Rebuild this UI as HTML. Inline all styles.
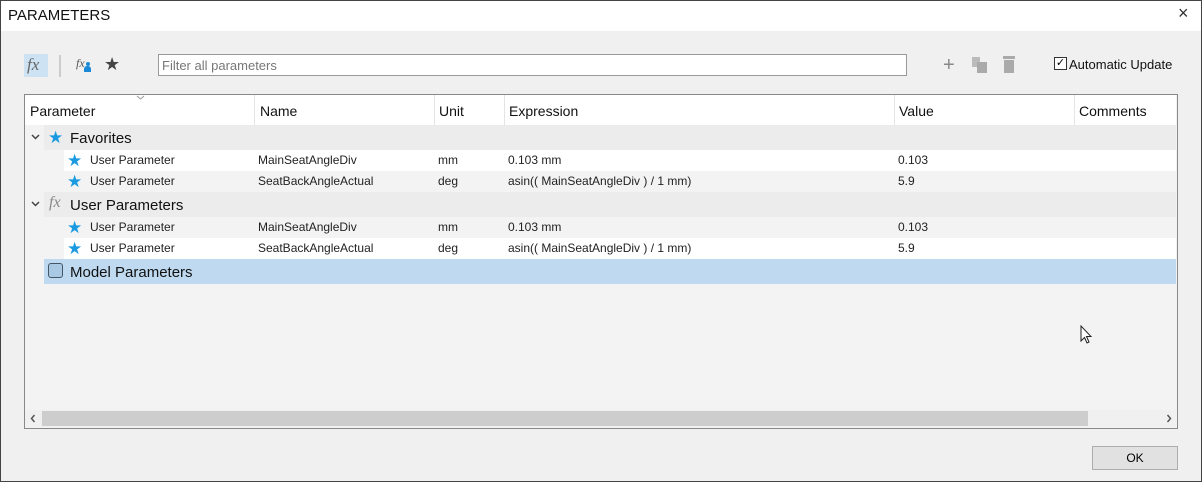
<!DOCTYPE html><html><head><style>
*{margin:0;padding:0;box-sizing:border-box}
body{width:1202px;height:482px;background:#f0f0f0;font-family:"Liberation Sans",sans-serif;position:relative;overflow:hidden}
.a{position:absolute}
.t{font-size:12px;color:#222;white-space:nowrap}
.h{font-size:14px;color:#111;white-space:nowrap}
.star{color:#1a9ae0;font-size:17px;line-height:1}
</style></head><body>
<div class="a" style="left:0;top:0;width:1202px;height:31px;background:#fff"></div>
<div class="a" style="left:0;top:0;width:1202px;height:482px;border:1px solid #444;z-index:5"></div>
<div class="a h" style="left:8px;top:7px;font-size:15px">PARAMETERS</div>
<div class="a" style="left:1178px;top:3px;font-size:18px;color:#333">×</div>
<div class="a" style="left:24px;top:54px;width:24px;height:23px;background:#cde3f4"></div>
<div class="a" style="left:27px;top:55px;font-family:'Liberation Serif';font-style:italic;font-size:17px;color:#666">fx</div>
<div class="a" style="left:59px;top:55px;width:2px;height:22px;background:#ccc"></div>
<div class="a" style="left:76px;top:56px;font-family:'Liberation Serif';font-style:italic;font-size:12px;color:#555">fx</div>
<div class="a" style="left:84px;top:66px;width:7px;height:6px;border-radius:3px 3px 0 0;background:#1a8ad8"></div>
<div class="a" style="left:86px;top:62px;width:4px;height:4px;border-radius:50%;background:#1a8ad8"></div>
<div class="a" style="left:104px;top:54px;font-size:18px;color:#444">★</div>
<div class="a" style="left:158px;top:54px;width:749px;height:22px;background:#fff;border:1px solid #999"></div>
<div class="a" style="left:162px;top:58px;font-size:13px;color:#777">Filter all parameters</div>
<div class="a" style="left:943px;top:54px;font-size:20px;color:#888">+</div>
<div class="a" style="left:972px;top:57px;width:8px;height:10px;background:#bbb"></div>
<div class="a" style="left:977px;top:62px;width:10px;height:11px;background:#aaa"></div>
<div class="a" style="left:1003px;top:56px;width:12px;height:3px;background:#aaa"></div>
<div class="a" style="left:1004px;top:60px;width:10px;height:13px;background:#aaa"></div>
<div class="a" style="left:1054px;top:57px;width:13px;height:13px;border:1px solid #333;background:#fff;font-size:11px;line-height:11px;text-align:center">✓</div>
<div class="a" style="left:1069px;top:57px;font-size:13px;color:#111">Automatic Update</div>
<div class="a" style="left:24px;top:94px;width:1154px;height:335px;border:1px solid #888;background:#f3f3f3"></div>
<div class="a" style="left:25px;top:95px;width:1151px;height:30px;background:#fff"></div>
<svg class="a" style="left:136px;top:95px" width="9" height="5"><path d="M1 1L4.5 4L8 1" fill="none" stroke="#999"/></svg>
<div class="a h" style="left:30px;top:103px">Parameter</div>
<div class="a h" style="left:260px;top:103px">Name</div>
<div class="a h" style="left:439px;top:103px">Unit</div>
<div class="a h" style="left:509px;top:103px">Expression</div>
<div class="a h" style="left:899px;top:103px">Value</div>
<div class="a h" style="left:1079px;top:103px">Comments</div>
<div class="a" style="left:254px;top:95px;width:1px;height:30px;background:#e4e4e4"></div>
<div class="a" style="left:434px;top:95px;width:1px;height:30px;background:#e4e4e4"></div>
<div class="a" style="left:504px;top:95px;width:1px;height:30px;background:#e4e4e4"></div>
<div class="a" style="left:894px;top:95px;width:1px;height:30px;background:#e4e4e4"></div>
<div class="a" style="left:1074px;top:95px;width:1px;height:30px;background:#e4e4e4"></div>
<!-- favorites -->
<div class="a" style="left:44px;top:125px;width:1132px;height:25px;background:#ececec"></div>
<svg class="a" style="left:31px;top:134px" width="9" height="6"><path d="M1 1L4.5 4.5L8 1" fill="none" stroke="#444" stroke-width="1.5"/></svg>
<div class="a star" style="left:48px;top:129px">★</div>
<div class="a h" style="left:70px;top:130px;font-size:15px">Favorites</div>
<div class="a" style="left:64px;top:150px;width:1112px;height:21px;background:#fff"></div>
<div class="a star" style="left:67px;top:152px">★</div>
<div class="a t" style="left:90px;top:153px">User Parameter</div>
<div class="a t" style="left:258px;top:153px">MainSeatAngleDiv</div>
<div class="a t" style="left:438px;top:153px">mm</div>
<div class="a t" style="left:508px;top:153px">0.103 mm</div>
<div class="a t" style="left:898px;top:153px">0.103</div>
<div class="a star" style="left:67px;top:173px">★</div>
<div class="a t" style="left:90px;top:174px">User Parameter</div>
<div class="a t" style="left:258px;top:174px">SeatBackAngleActual</div>
<div class="a t" style="left:438px;top:174px">deg</div>
<div class="a t" style="left:508px;top:174px">asin(( MainSeatAngleDiv ) / 1 mm)</div>
<div class="a t" style="left:898px;top:174px">5.9</div>
<!-- user params -->
<div class="a" style="left:44px;top:192px;width:1132px;height:25px;background:#ececec"></div>
<svg class="a" style="left:31px;top:201px" width="9" height="6"><path d="M1 1L4.5 4.5L8 1" fill="none" stroke="#444" stroke-width="1.5"/></svg>
<div class="a" style="left:49px;top:194px;font-family:'Liberation Serif';font-style:italic;font-size:16px;color:#888">fx</div>
<div class="a h" style="left:70px;top:197px;font-size:15px">User Parameters</div>
<div class="a star" style="left:67px;top:219px">★</div>
<div class="a t" style="left:90px;top:220px">User Parameter</div>
<div class="a t" style="left:258px;top:220px">MainSeatAngleDiv</div>
<div class="a t" style="left:438px;top:220px">mm</div>
<div class="a t" style="left:508px;top:220px">0.103 mm</div>
<div class="a t" style="left:898px;top:220px">0.103</div>
<div class="a" style="left:64px;top:238px;width:1112px;height:21px;background:#fff"></div>
<div class="a star" style="left:67px;top:240px">★</div>
<div class="a t" style="left:90px;top:241px">User Parameter</div>
<div class="a t" style="left:258px;top:241px">SeatBackAngleActual</div>
<div class="a t" style="left:438px;top:241px">deg</div>
<div class="a t" style="left:508px;top:241px">asin(( MainSeatAngleDiv ) / 1 mm)</div>
<div class="a t" style="left:898px;top:241px">5.9</div>
<div class="a" style="left:44px;top:259px;width:1132px;height:25px;background:#bfdaf0"></div>
<div class="a" style="left:48px;top:263px;width:15px;height:15px;border:1px solid #456;border-radius:3px;background:#a8c8e4"></div>
<div class="a h" style="left:70px;top:264px;font-size:15px">Model Parameters</div>
<!-- scrollbar -->
<div class="a" style="left:25px;top:410px;width:1151px;height:17px;background:#f0f0f0"></div>
<div class="a" style="left:42px;top:411px;width:1046px;height:15px;background:#cdcdcd"></div>
<svg class="a" style="left:30px;top:414px" width="6" height="9"><path d="M4.5 1L1.5 4.5L4.5 8" fill="none" stroke="#555" stroke-width="1.5"/></svg>
<svg class="a" style="left:1166px;top:414px" width="6" height="9"><path d="M1.5 1L4.5 4.5L1.5 8" fill="none" stroke="#555" stroke-width="1.5"/></svg>
<svg class="a" style="left:1080px;top:325px" width="12" height="19"><path d="M1 1L1 16L4.5 12.5L7 18L9 17L6.5 11.5L11 11.5Z" fill="#fff" stroke="#222"/></svg>
<div class="a" style="left:1092px;top:446px;width:86px;height:24px;background:#e1e1e1;border:1px solid #adadad;font-size:12px;text-align:center;line-height:22px">OK</div>
</body></html>
